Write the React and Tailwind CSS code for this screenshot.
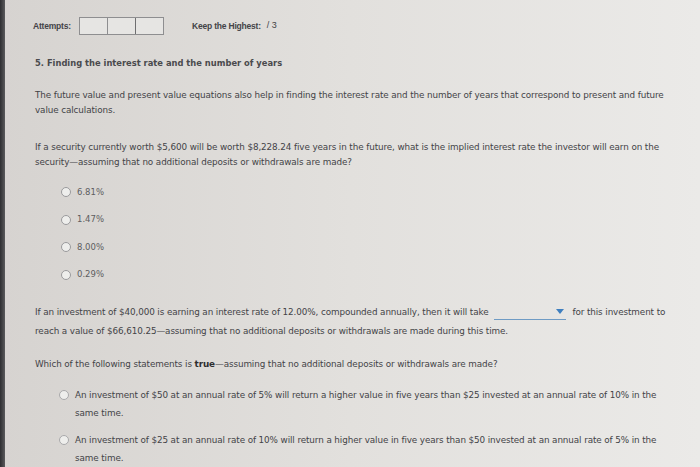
export default function App() {
  const rates = ["6.81%", "1.47%", "8.00%", "0.29%"];

  return (
    <div
      className="w-[700px] h-[467px] overflow-hidden flex flex-col bg-gradient-to-r from-[#d6d3d0] via-[#e2e0dd] to-[#ebeae8] text-[#434347]"
      style={{ fontFamily: '"DejaVu Sans", Verdana, sans-serif' }}
    >
      <div className="flex-1 flex">
        {/* dark screen edge */}
        <div className="w-[5px] bg-gradient-to-r from-[#2e2e31] to-[#5a5a5c]" />

        <div className="flex-1 pl-[28px] flex flex-col">
          {/* attempts */}
          <div
            className="flex items-center h-[18px] mt-[17px]"
            style={{ fontFamily: '"Liberation Sans", Arial, sans-serif' }}
          >
            <span className="text-[8.5px] font-bold w-[46px] tracking-[-0.2px]">Attempts:</span>
            <div className="flex h-[18px] border border-[#8e8e90] bg-[#e6e5e3]">
              <div className="w-[28px] border-r border-[#8e8e90]" />
              <div className="w-[28px] border-r border-[#6e6e70]" />
              <div className="w-[27px]" />
            </div>
            <span className="ml-[28px] text-[8.5px] font-bold tracking-[-0.2px]">Keep the Highest:</span>
            <span className="ml-[6px] text-[9px]">/ 3</span>
          </div>

          <div className="mt-[21px] ml-[2px] text-[8.35px] font-bold leading-[14px] text-[#4a4a4d]">
            5. Finding the interest rate and the number of years
          </div>

          <p className="mt-[18px] ml-[2px] text-[8.8px] leading-[15px] tracking-[-0.1px]">
            The future value and present value equations also help in finding the interest rate and the number of years that correspond to present and future
            <br />
            value calculations.
          </p>

          <p className="mt-[22px] ml-[2px] text-[8.8px] leading-[15px] tracking-[-0.1px]">
            If a security currently worth $5,600 will be worth $8,228.24 five years in the future, what is the implied interest rate the investor will earn on the
            <br />
            security—assuming that no additional deposits or withdrawals are made?
          </p>

          <div className="mt-[16px] ml-[28px] flex flex-col gap-[15.5px]">
            {rates.map((r) => (
              <label key={r} className="flex items-center h-[12px] text-[8.5px] text-[#5d5d60]">
                <span className="w-[10px] h-[10px] rounded-full border border-[#9a9a9c] bg-[#eeeeec] mr-[6px]" />
                {r}
              </label>
            ))}
          </div>

          <div className="mt-[19px] ml-[2px] text-[8.8px] tracking-[-0.1px]">
            <div className="flex items-end h-[20px]">
              <span className="leading-[15px]">
                If an investment of $40,000 is earning an interest rate of 12.00%, compounded annually, then it will take
              </span>
              <span className="ml-[6px] w-[72px] h-[15px] border-b border-[#6f9bc4] flex justify-end items-center pr-[2px]">
                <svg width="8" height="5" viewBox="0 0 8 5">
                  <path d="M0 0 L8 0 L4 5 Z" fill="#3f7fbf" />
                </svg>
              </span>
              <span className="ml-[6px] leading-[15px]">for this investment to</span>
            </div>
            <div className="leading-[23px]">
              reach a value of $66,610.25—assuming that no additional deposits or withdrawals are made during this time.
            </div>
          </div>

          <div className="mt-[14px] ml-[2px] text-[8.8px] leading-[15px] tracking-[-0.1px]">
            Which of the following statements is <b className="text-[#2e2e30]">true</b>—assuming that no additional deposits or withdrawals are made?
          </div>

          <div className="mt-[14px] ml-[26px] flex flex-col gap-[8px] text-[8.8px] leading-[18.5px] tracking-[-0.1px]">
            <div className="flex items-start">
              <span className="mt-[4px] w-[10px] h-[10px] rounded-full border border-[#a9a9ab] bg-[#eeeeec] mr-[6px] shrink-0" />
              <span>
                An investment of $50 at an annual rate of 5% will return a higher value in five years than $25 invested at an annual rate of 10% in the
                <br />
                same time.
              </span>
            </div>
            <div className="flex items-start">
              <span className="mt-[4px] w-[10px] h-[10px] rounded-full border border-[#a9a9ab] bg-[#eeeeec] mr-[6px] shrink-0" />
              <span>
                An investment of $25 at an annual rate of 10% will return a higher value in five years than $50 invested at an annual rate of 5% in the
                <br />
                same time.
              </span>
            </div>
          </div>
        </div>
      </div>
      <div className="h-[4px] bg-[#f4f4f3]" />
    </div>
  );
}
